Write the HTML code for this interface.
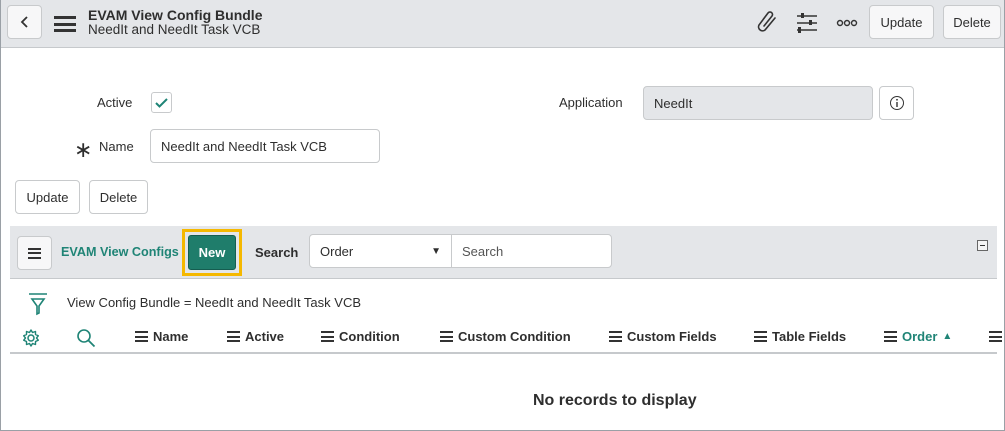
<!DOCTYPE html>
<html><head><style>
*{box-sizing:border-box;margin:0;padding:0}
body{width:1005px;height:431px;overflow:hidden;background:#fff;font-family:"Liberation Sans",sans-serif;color:#2e2e2e;position:relative;font-size:13px}
.frame{position:absolute;left:0;top:0;width:1005px;height:431px;border:1px solid #9aa0a6;border-top:none}
.abs{position:absolute}
.btn{position:absolute;border:1px solid #c8cacc;border-radius:4px;background:#f7f7f8;font-size:13px;display:flex;align-items:center;justify-content:center;color:#2e2e2e}
.wbtn{background:#fff}
.field{position:absolute;border:1px solid #c8cacc;border-radius:4px;background:#fff;font-size:13px;padding-left:10px;display:flex;align-items:center}
.lbl{position:absolute;font-size:13px}
.col{position:absolute;top:329px;font-weight:bold;font-size:13px;display:flex;align-items:center;gap:5px}
.ham{display:inline-block;width:13px;height:11px;border-top:2px solid #333;border-bottom:2px solid #333;position:relative}
.ham:after{content:"";position:absolute;left:0;right:0;top:2.5px;border-top:2px solid #333}
</style></head><body>
<div class="abs" style="left:0;top:0;width:1005px;height:48px;background:#e4e6e9;border-bottom:1px solid #c6c9cc"></div>
<div class="btn" style="left:7px;top:5px;width:35px;height:34px"><svg width="12" height="14"><path d="M8 2L3 7l5 5" stroke="#333" stroke-width="1.8" fill="none"/></svg></div>
<div class="abs" style="left:54px;top:16px;width:22px;height:16px;border-top:3px solid #333;border-bottom:3px solid #333"><div style="margin-top:3.5px;border-top:3px solid #333"></div></div>
<div class="abs" style="left:88px;top:7px;font-weight:bold;font-size:14px">EVAM View Config Bundle</div>
<div class="abs" style="left:88px;top:22px;font-size:13.5px">NeedIt and NeedIt Task VCB</div>
<svg class="abs" style="left:754px;top:9px" width="26" height="28" viewBox="0 0 26 28"><path d="M10 17l8-10a2.5 2.5 0 0 0-4-3L5 16a4 4 0 0 0 6 5l10-12" stroke="#333" stroke-width="1.6" fill="none" stroke-linecap="round"/></svg>
<svg class="abs" style="left:795px;top:12px" width="24" height="24"><path d="M2 4h20M2 11h20M2 18h20" stroke="#333" stroke-width="1.6"/><rect x="6" y="1" width="3" height="5" fill="#333"/><rect x="14" y="8" width="3" height="5" fill="#333"/><rect x="3" y="15" width="3" height="6" fill="#333"/></svg>
<svg class="abs" style="left:836px;top:18px" width="22" height="10"><circle cx="4" cy="5" r="2.5" stroke="#333" stroke-width="1.4" fill="none"/><circle cx="11" cy="5" r="2.5" stroke="#333" stroke-width="1.4" fill="none"/><circle cx="18" cy="5" r="2.5" stroke="#333" stroke-width="1.4" fill="none"/></svg>
<div class="btn" style="left:869px;top:5px;width:65px;height:34px">Update</div>
<div class="btn" style="left:943px;top:5px;width:58px;height:34px">Delete</div>

<div class="lbl" style="left:97px;top:95px">Active</div>
<div class="abs" style="left:151px;top:92px;width:21px;height:21px;border:1px solid #c8cacc;border-radius:3px;background:#fff"><svg width="19" height="19"><path d="M4 10l3.5 3.5L15 6" stroke="#1f8476" stroke-width="2" fill="none"/></svg></div>
<div class="abs" style="left:74px;top:137px;font-size:22px">&#x2217;</div>
<div class="lbl" style="left:99px;top:139px">Name</div>
<div class="field" style="left:150px;top:129px;width:230px;height:34px">NeedIt and NeedIt Task VCB</div>
<div class="lbl" style="left:559px;top:95px">Application</div>
<div class="field" style="left:643px;top:86px;width:230px;height:34px;background:#e4e6e9">NeedIt</div>
<div class="btn wbtn" style="left:879px;top:86px;width:35px;height:34px"><svg width="16" height="16"><circle cx="8" cy="8" r="6.5" stroke="#333" fill="none"/><path d="M8 7v5" stroke="#333" stroke-width="1.4"/><circle cx="8" cy="4.8" r="0.9" fill="#333"/></svg></div>
<div class="btn wbtn" style="left:15px;top:180px;width:65px;height:34px">Update</div>
<div class="btn wbtn" style="left:89px;top:180px;width:59px;height:34px">Delete</div>

<div class="abs" style="left:10px;top:226px;width:987px;height:53px;background:#e4e6e9;border-bottom:1px solid #c6c9cc"></div>
<div class="btn" style="left:17px;top:236px;width:35px;height:34px"><span class="ham"></span></div>
<div class="abs" style="left:61px;top:245px;font-weight:bold;color:#1f8476;font-size:12.6px">EVAM View Configs</div>
<div class="abs" style="left:182px;top:229px;width:60px;height:47px;border:3px solid #f5b800"></div>
<div class="abs" style="left:188px;top:235px;width:48px;height:35px;background:#1f7d6b;border:1px solid #155d50;border-radius:3px;color:#fff;font-weight:bold;display:flex;align-items:center;justify-content:center">New</div>
<div class="abs" style="left:255px;top:245px;font-weight:bold">Search</div>
<div class="field" style="left:309px;top:234px;width:143px;height:34px;border-radius:4px 0 0 4px">Order<span style="position:absolute;right:10px;font-size:10px">&#9660;</span></div>
<div class="field" style="left:451px;top:234px;width:161px;height:34px;border-radius:0 4px 4px 0;color:#555">Search</div>
<div class="abs" style="left:977px;top:240px;width:11px;height:11px;border:1px solid #666;background:#f4f4f4"><div style="margin:4px 2px;border-top:1.5px solid #333"></div></div>

<svg class="abs" style="left:27px;top:292px" width="22" height="24"><path d="M2 2h18M5 7h12l-5 7v7l-2 1v-8z" stroke="#1f8476" stroke-width="1.6" fill="none"/></svg>
<div class="abs" style="left:67px;top:295px">View Config Bundle = NeedIt and NeedIt Task VCB</div>
<svg class="abs" style="left:21px;top:328px" width="20" height="20" viewBox="0 0 20 20"><circle cx="10" cy="10" r="3" stroke="#1f8476" stroke-width="1.5" fill="none"/><path d="M10 2l1.5 2.5 3-1 0 3 2.8 1.3-1.8 2.2 1.8 2.2-2.8 1.3 0 3-3-1L10 18l-1.5-2.5-3 1 0-3-2.8-1.3L4.5 10 2.7 7.8 5.5 6.5v-3l3 1z" stroke="#1f8476" stroke-width="1.4" fill="none" stroke-linejoin="round"/></svg>
<svg class="abs" style="left:76px;top:328px" width="22" height="22"><circle cx="8" cy="8" r="6" stroke="#1f8476" stroke-width="1.6" fill="none"/><path d="M12.5 12.5l6 6" stroke="#1f8476" stroke-width="1.8"/></svg>
<div class="col" style="left:135px"><span class="ham"></span>Name</div>
<div class="col" style="left:227px"><span class="ham"></span>Active</div>
<div class="col" style="left:321px"><span class="ham"></span>Condition</div>
<div class="col" style="left:440px"><span class="ham"></span>Custom Condition</div>
<div class="col" style="left:609px"><span class="ham"></span>Custom Fields</div>
<div class="col" style="left:754px"><span class="ham"></span>Table Fields</div>
<div class="col" style="left:884px;color:#1f8476"><span class="ham"></span>Order <span style="font-size:10px">&#9650;</span></div>
<div class="col" style="left:989px;top:331px"><span class="ham"></span></div>
<div class="abs" style="left:10px;top:352px;width:987px;height:2px;background:#c6c9cc"></div>
<div class="abs" style="left:533px;top:392px;font-weight:bold;font-size:16px">No records to display</div>
<div class="frame"></div>
</body></html>
